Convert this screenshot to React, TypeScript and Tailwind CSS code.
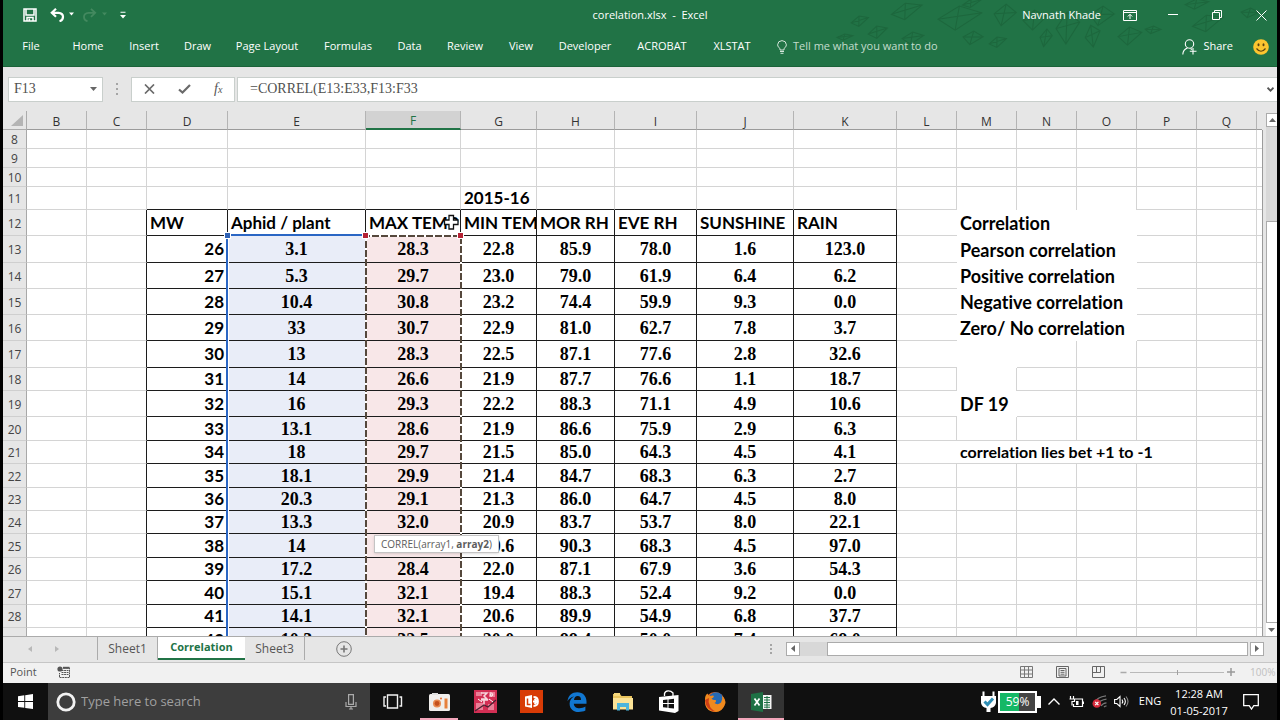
import type { ReactNode } from "react";
import clsx from "clsx";

type Row = { n: number; h: string; values?: string[] };

const COLUMNS = [
  { name: "B", w: "w-[60px]" },
  { name: "C", w: "w-[60px]" },
  { name: "D", w: "w-[81px]" },
  { name: "E", w: "w-[138px]" },
  { name: "F", w: "w-[95px]" },
  { name: "G", w: "w-[76px]" },
  { name: "H", w: "w-[78px]" },
  { name: "I", w: "w-[82px]" },
  { name: "J", w: "w-[97px]" },
  { name: "K", w: "w-[103px]" },
  { name: "L", w: "w-[60px]" },
  { name: "M", w: "w-[60px]" },
  { name: "N", w: "w-[60px]" },
  { name: "O", w: "w-[60px]" },
  { name: "P", w: "w-[60px]" },
  { name: "Q", w: "w-[60px]" },
];

// values run from column D to column K
const ROWS: Row[] = [
  { n: 8, h: "h-[19px]" },
  { n: 9, h: "h-[19px]" },
  { n: 10, h: "h-[19px]" },
  { n: 11, h: "h-[23px]", values: ["", "", "", "2015-16", "", "", "", ""] },
  { n: 12, h: "h-[26px]", values: ["MW", "Aphid / plant", "MAX TEMP", "MIN TEMP", "MOR RH", "EVE RH", "SUNSHINE", "RAIN"] },
  { n: 13, h: "h-[27px]", values: ["26", "3.1", "28.3", "22.8", "85.9", "78.0", "1.6", "123.0"] },
  { n: 14, h: "h-[26px]", values: ["27", "5.3", "29.7", "23.0", "79.0", "61.9", "6.4", "6.2"] },
  { n: 15, h: "h-[26px]", values: ["28", "10.4", "30.8", "23.2", "74.4", "59.9", "9.3", "0.0"] },
  { n: 16, h: "h-[26px]", values: ["29", "33", "30.7", "22.9", "81.0", "62.7", "7.8", "3.7"] },
  { n: 17, h: "h-[27px]", values: ["30", "13", "28.3", "22.5", "87.1", "77.6", "2.8", "32.6"] },
  { n: 18, h: "h-[23px]", values: ["31", "14", "26.6", "21.9", "87.7", "76.6", "1.1", "18.7"] },
  { n: 19, h: "h-[26px]", values: ["32", "16", "29.3", "22.2", "88.3", "71.1", "4.9", "10.6"] },
  { n: 20, h: "h-[24px]", values: ["33", "13.1", "28.6", "21.9", "86.6", "75.9", "2.9", "6.3"] },
  { n: 21, h: "h-[23px]", values: ["34", "18", "29.7", "21.5", "85.0", "64.3", "4.5", "4.1"] },
  { n: 22, h: "h-[24px]", values: ["35", "18.1", "29.9", "21.4", "84.7", "68.3", "6.3", "2.7"] },
  { n: 23, h: "h-[23px]", values: ["36", "20.3", "29.1", "21.3", "86.0", "64.7", "4.5", "8.0"] },
  { n: 24, h: "h-[23px]", values: ["37", "13.3", "32.0", "20.9", "83.7", "53.7", "8.0", "22.1"] },
  { n: 25, h: "h-[24px]", values: ["38", "14", "", "20.6", "90.3", "68.3", "4.5", "97.0"] },
  { n: 26, h: "h-[23px]", values: ["39", "17.2", "28.4", "22.0", "87.1", "67.9", "3.6", "54.3"] },
  { n: 27, h: "h-[24px]", values: ["40", "15.1", "32.1", "19.4", "88.3", "52.4", "9.2", "0.0"] },
  { n: 28, h: "h-[23px]", values: ["41", "14.1", "32.1", "20.6", "89.9", "54.9", "6.8", "37.7"] },
  { n: 29, h: "h-[24px]", values: ["42", "10.3", "32.5", "20.0", "88.4", "50.0", "7.4", "68.0"] },
];

// text in column M that spills to the right
const NOTES: Record<number, { text: string; span: number; small?: boolean; line?: boolean }> = {
  12: { text: "Correlation", span: 3 },
  13: { text: "Pearson correlation", span: 3 },
  14: { text: "Positive correlation", span: 3 },
  15: { text: "Negative correlation", span: 3 },
  16: { text: "Zero/ No correlation", span: 3 },
  17: { text: "", span: 1 },
  19: { text: "DF 19", span: 1 },
  21: { text: "correlation lies bet +1 to -1", span: 4, small: true, line: true },
};

const MENU = [
  { label: "File", w: "w-[56px]" },
  { label: "Home", w: "w-[58px]" },
  { label: "Insert", w: "w-[54px]" },
  { label: "Draw", w: "w-[53px]" },
  { label: "Page Layout", w: "w-[86px]" },
  { label: "Formulas", w: "w-[76px]" },
  { label: "Data", w: "w-[47px]" },
  { label: "Review", w: "w-[64px]" },
  { label: "View", w: "w-[48px]" },
  { label: "Developer", w: "w-[80px]" },
  { label: "ACROBAT", w: "w-[74px]" },
  { label: "XLSTAT", w: "w-[66px]" },
];

// x, y, half width, half height
const KITES = [
  [80, 11, 16, 8], [133, 18, 22, 12], [178, 15, 11, 11], [51, 32, 10, 6], [86, 38, 11, 6], [146, 38, 10, 7],
  [171, 42, 9, 5], [241, 28, 12, 16], [219, 38, 6, 9], [266, 36, 8, 11], [303, 36, 12, 9], [326, 30, 8, 4],
  [381, 23, 16, 8], [208, 20, 12, 10], [275, 16, 12, 10], [145, 3, 10, 4], [370, 4, 12, 5], [423, 13, 9, 5],
  [33, 21, 9, 5], [18, 37, 8, 3],
];

function KitePattern() {
  return (
    <svg viewBox="0 0 450 52" className="absolute right-0 top-0 h-[52px] w-[450px]" fill="none" stroke="#1d673d" aria-hidden="true">
      {KITES.map(([x, y, a, b], i) => (
        <path
          key={i}
          transform={`rotate(${(i % 3) * 9 - 12} ${x} ${y})`}
          d={`M${x - a} ${y} L${x} ${y - b} L${x + a} ${y - b / 3} L${x - a / 4} ${y + b} Z M${x - a} ${y} L${x + a} ${y - b / 3} M${x} ${y - b} L${x - a / 4} ${y + b}`}
        />
      ))}
    </svg>
  );
}

function IconButton({ label, className, children }: { label: string; className?: string; children: ReactNode }) {
  return (
    <button type="button" aria-label={label} className={clsx("flex shrink-0 items-center justify-center", className)}>
      {children}
    </button>
  );
}

function TitleBar() {
  return (
    <div className="relative flex h-[30px] items-center text-[11px] text-white">
      <div className="flex flex-1 items-center pl-5">
        <IconButton label="Save" className="w-[14px]">
          <svg width="14" height="14" viewBox="0 0 14 14" fill="none" stroke="#fff" strokeWidth="1.5">
            <path d="M1 1h12v12H1zM3 1v6h8V1M4 13V9.500h6V13" />
            <path d="M5.5 10.5h1.6V13H5.5z" fill="#fff" stroke="none" />
          </svg>
        </IconButton>
        <IconButton label="Undo" className="ml-[13px]">
          <svg width="24" height="14" viewBox="0 0 24 14" fill="none">
            <path d="M6 0.8L1.8 4.8L6 8.8M2 4.8h6.5q4.5 0.4 4.5 4t-3.5 4.4" stroke="#fff" strokeWidth="2.2" />
            <path d="M19 4.5h5l-2.5 3z" fill="#fff" />
          </svg>
        </IconButton>
        <IconButton label="Redo" className="ml-2">
          <svg width="26" height="14" viewBox="0 0 26 14" fill="none">
            <path d="M9 0.8L13.2 4.8L9 8.8M13 4.8H6.500q-4.500 0.400-4.500 4t3.500 4.400" stroke="#43895f" strokeWidth="1.800" />
            <path d="M20 4.500h5l-2.500 3z" fill="#43895f" />
          </svg>
        </IconButton>
        <IconButton label="Customize Quick Access Toolbar" className="ml-3">
          <svg width="6" height="8" viewBox="0 0 6 8" fill="#fff">
            <path d="M0.500 0.800h5v1h-5zM0 4h6L3 7.500z" />
          </svg>
        </IconButton>
      </div>
      <h1 className="whitespace-pre">corelation.xlsx  -  Excel</h1>
      <div className="flex flex-1 items-center justify-end">
        <span>Navnath Khade</span>
        <IconButton label="Ribbon Display Options" className="ml-5 w-[18px]">
          <svg width="14" height="11" viewBox="0 0 14 11" fill="none" stroke="#fff">
            <path d="M0.500 0.500h13v10h-13zM0.500 2.500h13M7 9V4.500M4.800 6.500L7 4.300L9.200 6.500" />
          </svg>
        </IconButton>
        <IconButton label="Minimize" className="ml-6 w-[20px]">
          <svg width="10" height="10" viewBox="0 0 10 10" stroke="#fff"><path d="M0 4.500h10" /></svg>
        </IconButton>
        <IconButton label="Restore" className="ml-6 w-[20px]">
          <svg width="10" height="10" viewBox="0 0 10 10" fill="none" stroke="#fff">
            <path d="M0.500 2.500h7v7h-7zM2.500 2.500v-2h7v7h-2" />
          </svg>
        </IconButton>
        <IconButton label="Close" className="ml-6 mr-1.5 w-[20px]">
          <svg width="11" height="11" viewBox="0 0 11 11" stroke="#fff"><path d="M0.500 0.500l10 10M10.500 0.500l-10 10" /></svg>
        </IconButton>
      </div>
    </div>
  );
}

function Ribbon() {
  return (
    <div className="relative flex h-[37px] items-center pb-1 text-[11px] text-white">
      <nav className="flex">
        {MENU.map((m) => (
          <button key={m.label} type="button" className={clsx("whitespace-nowrap text-center", m.w)}>
            {m.label}
          </button>
        ))}
      </nav>
      <button type="button" className="ml-3 flex items-center gap-1.5 text-[#c3dccd]">
        <svg width="10" height="14" viewBox="0 0 10 14" fill="none" stroke="#d5e7dc">
          <path d="M3 10V8.500Q0.600 7 0.600 4.800Q0.800 0.800 5 0.600Q9.200 0.800 9.400 4.800Q9.400 7 7 8.500V10zM3 11.500h4M3.500 13.300h3" />
        </svg>
        Tell me what you want to do
      </button>
      <button type="button" className="ml-auto flex items-center gap-1.5">
        <svg width="15" height="16" viewBox="0 0 15 16" fill="none" stroke="#fff" strokeWidth="1.100">
          <circle cx="7.500" cy="5" r="4.200" />
          <path d="M0.800 15.500Q1 10.500 5.500 9M8.500 9.500l1.500 1M11 9v6.500M7.800 12.300h6.700" />
        </svg>
        Share
      </button>
      <IconButton label="Feedback" className="ml-5 mr-2">
        <svg width="16" height="16" viewBox="0 0 16 16">
          <circle cx="8" cy="8" r="7.800" fill="#fcc52f" />
          <ellipse cx="5.500" cy="5.800" rx="1" ry="1.500" fill="#5b4210" />
          <ellipse cx="10.500" cy="5.800" rx="1" ry="1.500" fill="#5b4210" />
          <path d="M3.500 9.500q4.500 5.500 9 0" fill="none" stroke="#5b4210" strokeWidth="1.200" />
        </svg>
      </IconButton>
    </div>
  );
}

function FormulaBar() {
  return (
    <div className="flex h-[44px] shrink-0 items-center bg-[#e6e6e6] pl-[5px]">
      <div className="flex h-[25px] w-[95px] items-center border border-[#c9cfcc] bg-white">
        <input aria-label="Name Box" defaultValue="F13" className="w-0 flex-1 pl-[5px] font-['Liberation_Serif',serif] text-sm text-[#505050] outline-none" />
        <IconButton label="Open name list" className="w-[18px]">
          <svg width="7" height="4" viewBox="0 0 7 4" fill="#666"><path d="M0 0h7L3.500 4z" /></svg>
        </IconButton>
      </div>
      <svg width="2" height="12" viewBox="0 0 2 12" fill="#a5a5a5" className="mx-[13px]">
        <path d="M0 0h2v2H0zM0 5h2v2H0zM0 10h2v2H0z" />
      </svg>
      <div className="flex h-[25px] w-[104px] items-center justify-around border border-[#c9cfcc] bg-white">
        <IconButton label="Cancel">
          <svg width="11" height="10" viewBox="0 0 11 10" stroke="#6a6a6a" strokeWidth="1.700"><path d="M1 0.500l9 9M10 0.500l-9 9" /></svg>
        </IconButton>
        <IconButton label="Enter">
          <svg width="13" height="10" viewBox="0 0 13 10" fill="none" stroke="#6a6a6a" strokeWidth="2.200"><path d="M1 5.500l3.500 3L12 1" /></svg>
        </IconButton>
        <button type="button" aria-label="Insert Function" className="font-['Liberation_Serif',serif] text-sm italic leading-none text-[#555]">
          f<span className="text-[10px]">x</span>
        </button>
      </div>
      <div className="ml-[2px] flex h-[25px] flex-1 items-center border border-r-0 border-[#c9cfcc] bg-white">
        <input aria-label="Formula Bar" defaultValue="=CORREL(E13:E33,F13:F33" className="w-0 flex-1 pl-3 font-['Liberation_Serif',serif] text-sm text-[#505050] outline-none" />
        <IconButton label="Expand Formula Bar" className="w-[14px]">
          <svg width="7" height="5" viewBox="0 0 7 5" fill="none" stroke="#555" strokeWidth="1.800"><path d="M0.500 0.700L3.500 3.700L6.500 0.700" /></svg>
        </IconButton>
      </div>
    </div>
  );
}

function SheetRow({ row }: { row: Row }) {
  const note = NOTES[row.n];
  const inTable = row.n >= 12;
  const cells: ReactNode[] = [];
  for (let c = 0; c < COLUMNS.length; c++) {
    const { name } = COLUMNS[c];
    if (name === "M" && note) {
      cells.push(
        <td
          key={name}
          colSpan={note.span}
          className={clsx(
            "whitespace-nowrap border-[#d4d4d4] pl-[3px]",
            note.small ? "text-base leading-[18px]" : "text-lg leading-[18px]",
            note.line && "border-b border-r",
          )}
        >
          {note.text}
        </td>,
      );
      c += note.span - 1;
      continue;
    }
    const value = c >= 2 && c <= 9 ? row.values?.[c - 2] : undefined;
    const isData = row.n >= 13 && c >= 3 && c <= 9;
    const blackBottom = row.n >= 11 && c >= 2 && c <= 9;
    const blackRight = inTable && c >= 1 && c <= 9;
    const noRight = name === "L" && note;
    const noBottom = (row.n === 11 && (name === "M" || name === "N" || name === "O")) || (row.n === 18 && name === "M");
    cells.push(
      <td
        key={name}
        className={clsx(
          "overflow-hidden whitespace-nowrap leading-[18px]",
          !noBottom && "border-b",
          !noRight && "border-r",
          blackBottom ? "border-b-[#1c1c1c]" : "border-b-[#d4d4d4]",
          blackRight ? "border-r-[#1c1c1c]" : "border-r-[#d4d4d4]",
          isData ? "text-center font-['Liberation_Serif',serif] text-[18px]" : "text-[17px]",
          !isData && (name === "D" && row.n >= 13 ? "pr-[3px] text-right" : "pl-[3px]"),
          row.n >= 13 && name === "E" && "bg-[#e9edf8]",
          row.n >= 13 && name === "F" && "bg-[#f8e7e8]",
        )}
      >
        {value}
      </td>,
    );
  }
  return (
    <tr className={row.h}>
      <th scope="row" className="border-b border-r border-b-[#cfcfcf] border-r-[#a8a8a8] bg-[#e6e6e6] pt-0.5 text-center align-middle font-['Open_Sans',sans-serif] text-xs font-normal leading-3 text-[#444]">
        {row.n}
      </th>
      {cells}
      <td className="border-b border-[#d4d4d4]" />
    </tr>
  );
}

function Selection() {
  return (
    <>
      <div className="absolute bottom-0 left-[223px] top-[123px] w-[140px] border-l-2 border-t-2 border-[#2a66c4]" />
      <div className="absolute bottom-0 left-[225px] top-[125px] w-px bg-white" />
      <div className="absolute left-[222px] top-[122px] size-[5px] bg-[#2f62b5] outline outline-white" />
      <svg className="absolute left-[361px] top-[122px] h-[408px] w-[98px]" fill="none" aria-hidden="true">
        <path d="M2 600V3H97V600" stroke="#fff" strokeWidth="2" />
        <path d="M2 600V3H97V600" stroke="#55483c" strokeWidth="2" strokeDasharray="7 2" />
      </svg>
      <div className="absolute left-[360px] top-[122px] size-[5px] bg-[#b52234] outline outline-white" />
      <div className="absolute left-[455px] top-[122px] size-[5px] bg-[#b52234] outline outline-white" />
    </>
  );
}

function Grid() {
  return (
    <div className="flex min-h-0 flex-1 bg-[#e6e6e6]">
      <div className="relative min-w-0 flex-1 overflow-hidden">
        <table className="w-full table-fixed border-separate border-spacing-0 bg-white font-['Lato',sans-serif] font-bold leading-[18px] text-black [font-variant-ligatures:none]">
          <colgroup>
            <col className="w-[24px]" />
            {COLUMNS.map((c) => <col key={c.name} className={c.w} />)}
            <col />
          </colgroup>
          <thead>
            <tr className="h-[19px] bg-[#e6e6e6]">
              <th aria-label="Select all" className="border-b border-r border-[#ababab]">
                <svg width="12" height="11" viewBox="0 0 12 11" fill="#b4b4b4" className="ml-auto mr-[3px]"><path d="M12 0v11H0z" /></svg>
              </th>
              {COLUMNS.map((c) => (
                <th
                  key={c.name}
                  scope="col"
                  className={clsx(
                    "border-b border-r border-r-[#b4b4b4] pt-[3px] font-['Open_Sans',sans-serif] text-xs font-normal leading-[14px]",
                    c.name === "F" ? "border-b-2 border-b-[#217346] bg-[#d2d2d2] text-[#217346]" : "border-b-[#9b9b9b] text-[#333]",
                  )}
                >
                  {c.name}
                </th>
              ))}
              <th className="border-b border-[#9b9b9b]" />
            </tr>
          </thead>
          <tbody>
            {ROWS.map((row) => <SheetRow key={row.n} row={row} />)}
          </tbody>
        </table>
        <Selection />
        <svg className="absolute left-[440px] top-[103px] size-4" viewBox="0 0 16 16" fill="#fff" stroke="#111" strokeWidth="1.300" aria-hidden="true">
          <path d="M6 1.500h4.500V6H15v4.500h-4.500V15H6v-4.500H1.500V6H6z" />
        </svg>
        <div className="absolute left-[371px] top-[424px] flex h-[18px] items-center border border-[#c4c4c4] bg-white px-1.5 font-['Open_Sans',sans-serif] text-[10px] text-[#5c5c5c] shadow">
          <span>CORREL(array1, <b>array2</b>)</span>
        </div>
      </div>
      <div className="mt-[19px] w-px bg-[#9b9b9b]" />
      <div className="flex w-[14px] flex-col pl-[3px] pt-[2px]">
        <IconButton label="Scroll up" className="h-[14px] border border-r-0 border-[#ababab] bg-white">
          <svg width="7" height="4" viewBox="0 0 7 4" fill="#666"><path d="M0 4h7L3.500 0z" /></svg>
        </IconButton>
        <div className="h-[94px] bg-[#d8d8d8]" />
        <div className="flex-1 border border-r-0 border-[#ababab] bg-white" />
        <IconButton label="Scroll down" className="h-[13px] bg-white">
          <svg width="7" height="4" viewBox="0 0 7 4" fill="#666"><path d="M0 0h7L3.500 4z" /></svg>
        </IconButton>
      </div>
    </div>
  );
}

function SheetTabs() {
  return (
    <div className="flex h-[27px] shrink-0 items-start border-y border-t-[#ababab] border-b-[#c6c6c6] bg-[#e6e6e6] text-xs text-[#555]">
      <div className="flex h-[23px] w-[95px] items-center border-r border-[#ababab] pl-[25px]">
        <IconButton label="Previous sheet">
          <svg width="4" height="6" viewBox="0 0 4 6" fill="#b8b8b8"><path d="M4 0v6L0 3z" /></svg>
        </IconButton>
        <IconButton label="Next sheet" className="ml-[23px]">
          <svg width="4" height="6" viewBox="0 0 4 6" fill="#b8b8b8"><path d="M0 0v6L4 3z" /></svg>
        </IconButton>
      </div>
      <button type="button" className="h-[23px] w-[60px] border-r border-[#ababab]">Sheet1</button>
      <button type="button" className="h-[23px] w-[87px] border-b-2 border-[#217346] bg-white text-[11px] font-bold text-[#217346]">Correlation</button>
      <button type="button" className="h-[23px] w-[60px] border-r border-[#ababab]">Sheet3</button>
      <IconButton label="New sheet" className="ml-[31px] h-[23px]">
        <svg width="16" height="16" viewBox="0 0 16 16" fill="none" stroke="#777"><circle cx="8" cy="8" r="7.300" /><path d="M8 4.500v7M4.500 8h7" strokeWidth="1.600" /></svg>
      </IconButton>
      <div className="ml-auto flex h-[23px] w-[507px] items-center pr-[13px]">
        <svg width="2" height="10" viewBox="0 0 2 10" fill="#a5a5a5" className="mr-[14px]">
          <path d="M0 0h2v2H0zM0 4h2v2H0zM0 8h2v2H0z" />
        </svg>
        <IconButton label="Scroll left" className="h-[14px] w-[14px] border border-[#ababab] bg-white">
          <svg width="4" height="7" viewBox="0 0 4 7" fill="#666"><path d="M4 0v7L0 3.500z" /></svg>
        </IconButton>
        <div className="h-[14px] w-[27px] bg-[#d8d8d8]" />
        <div className="h-[14px] flex-1 border border-[#ababab] bg-white" />
        <IconButton label="Scroll right" className="ml-[2px] h-[14px] w-[14px] border border-[#ababab] bg-white">
          <svg width="4" height="7" viewBox="0 0 4 7" fill="#666"><path d="M0 0v7L4 3.500z" /></svg>
        </IconButton>
      </div>
    </div>
  );
}

function StatusBar() {
  return (
    <div className="flex h-[20px] shrink-0 items-center bg-[#f1f1f1] pb-0.5 pl-[7px] text-[11px] text-[#555]">
      <span className="w-[27px]">Point</span>
      <IconButton label="Record macro" className="ml-5">
        <svg width="13" height="12" viewBox="0 0 13 12" fill="none" stroke="#555">
          <circle cx="3" cy="3" r="2.600" fill="#555" stroke="none" />
          <path d="M6.500 2h6v9.500h-10V7M4.500 6.500h7M4.500 8.500h7M4.500 4.500h7" strokeDasharray="2 0.600" />
          <path d="M6 0.800h6.500v2H6z" fill="#555" stroke="none" />
        </svg>
      </IconButton>
      <div className="ml-auto flex items-center">
        <IconButton label="Normal view">
          <svg width="13" height="12" viewBox="0 0 13 12" fill="none" stroke="#777"><path d="M0.500 0.500h12v11h-12zM4.500 0.500v11M8.500 0.500v11M0.500 4h12M0.500 8h12" /></svg>
        </IconButton>
        <IconButton label="Page layout view" className="ml-[23px]">
          <svg width="13" height="12" viewBox="0 0 13 12" fill="none" stroke="#666"><path d="M0.500 0.500h12v11h-12zM3 2.500h7v7.500H3zM4.500 4.500h4M4.500 6.300h4M4.500 8.200h4" /></svg>
        </IconButton>
        <IconButton label="Page break preview" className="ml-[23px]">
          <svg width="13" height="12" viewBox="0 0 13 12" fill="none" stroke="#666"><path d="M0.500 0.500h12v11h-12zM4.500 0.500v6M8.500 0.500v6M0.500 6.500h8" /></svg>
        </IconButton>
        <IconButton label="Zoom out" className="ml-[15px]">
          <svg width="7" height="7" viewBox="0 0 7 7" stroke="#aaa" strokeWidth="1.500"><path d="M0.500 3.500h6" /></svg>
        </IconButton>
        <div className="ml-[3px] flex w-[94px] items-center">
          <input type="range" aria-label="Zoom" className="h-px w-full appearance-none bg-[#b9b9b9] [&::-webkit-slider-thumb]:h-[5px] [&::-webkit-slider-thumb]:w-px [&::-webkit-slider-thumb]:appearance-none [&::-webkit-slider-thumb]:bg-[#a0a0a0]" />
        </div>
        <IconButton label="Zoom in" className="ml-[3px]">
          <svg width="8" height="8" viewBox="0 0 8 8" stroke="#999" strokeWidth="1.500"><path d="M0 4h8M4 0v8" /></svg>
        </IconButton>
        <span className="ml-[15px] w-[27px] text-[10px] text-[#c0c0c0]">100%</span>
      </div>
    </div>
  );
}

function TaskApp({ label, open, active, children }: { label: string; open?: boolean; active?: boolean; children: ReactNode }) {
  return (
    <button type="button" aria-label={label} className={clsx("relative flex w-[46px] items-center justify-center", active && "bg-[#333]")}>
      {children}
      {open && <span className={clsx("absolute bottom-0 h-[2px] bg-[#f3a6bb]", active ? "inset-x-0" : "inset-x-1")} />}
    </button>
  );
}

function Taskbar() {
  return (
    <footer className="flex h-[37px] shrink-0 bg-[#101010] text-white">
      <IconButton label="Start" className="w-[45px]">
        <svg width="15" height="15" viewBox="0 0 15 15" fill="#fff"><path d="M0 2.200L6.300 1.300V7H0zM7.200 1.200L15 0v7H7.200zM0 8h6.300v5.800L0 12.900zM7.200 8H15v7l-7.800-1.100z" /></svg>
      </IconButton>
      <div className="flex w-[322px] items-center bg-[#3d3d3d] pl-2">
        <svg width="20" height="20" viewBox="0 0 20 20" fill="none" stroke="#f2f2f2" strokeWidth="2.800"><circle cx="10" cy="10" r="8.200" /></svg>
        <input aria-label="Search" placeholder="Type here to search" className="ml-[5px] w-0 flex-1 text-[13px] outline-none placeholder:text-[#a0a0a0]" />
        <IconButton label="Voice search" className="mr-[13px]">
          <svg width="12" height="16" viewBox="0 0 12 16" fill="none" stroke="#aaa" strokeWidth="1.200"><path d="M3.600 0.600h4.800v9.800H3.600zM1 8v4.500h10V8M6 12.500V15M4 15h4" /></svg>
        </IconButton>
      </div>
      <TaskApp label="Task View">
        <svg width="20" height="15" viewBox="0 0 20 15" fill="none" stroke="#f2f2f2" strokeWidth="1.400"><path d="M4.500 1h10v13h-10zM3 3H1v9h2M16.500 3h2v9h-2" /></svg>
      </TaskApp>
      <TaskApp label="Screen recorder" open>
        <svg width="21" height="18" viewBox="0 0 21 18">
          <rect y="1" width="21" height="17" rx="1.500" fill="#f0eeec" />
          <path d="M3 0h6v2H3z" fill="#ddd" />
          <circle cx="8" cy="10.500" r="4" fill="#e8894f" /><circle cx="8" cy="10.500" r="2.400" fill="#c4501c" /><circle cx="12" cy="5.500" r="1" fill="#e66a2c" />
          <path d="M15.500 5.500h3v10h-3z" fill="#e6803c" />
        </svg>
      </TaskApp>
      <TaskApp label="Statistics">
        <svg width="23" height="23" viewBox="0 0 23 23" fill="none">
          <rect width="23" height="23" fill="#d22f54" />
          <path d="M2 2h6v4H2zM15 2h6v5h-6zM2 13h7v7H2zM14 14h6v6h-6z" fill="#ea7f97" />
          <path d="M7 3h6l-3 3 3 3H7M10 10v6M7 10h7" stroke="#f7d7de" strokeWidth="1.500" />
          <path d="M1 21L10 15l4 2 8-7" stroke="#4a2130" strokeWidth="1.300" />
          <path d="M16 3q4 0 2 3-3 1-1-2M4 9l4 3M15 9l4 3" stroke="#fff" />
        </svg>
      </TaskApp>
      <TaskApp label="Lync dictionary">
        <svg width="23" height="23" viewBox="0 0 23 23" fill="none">
          <rect width="23" height="23" fill="#d83b06" />
          <path d="M5 6.500l7-1.500v13l-7-1.500z" fill="#fff" />
          <path d="M7.500 8.500v6h3" stroke="#d83b06" strokeWidth="1.500" />
          <path d="M13.500 7q4.500 0 4.500 4.500T13.500 16M13 11.500h3.500M14.500 9l2.500 2.500-2.500 2.500" stroke="#fff" strokeWidth="1.800" />
        </svg>
      </TaskApp>
      <TaskApp label="Edge">
        <svg width="20" height="20" viewBox="0 0 20 20" fill="#1177d1">
          <path d="M0.500 9.200C1.300 3.500 5 0.300 10.300 0.300c6 0 9.200 4.300 9.200 9.200v2.200H6.800c0.200 3.200 2.700 4.500 5.700 4.500 2.200 0 4.200-0.600 5.900-1.600v4c-1.900 1-4.300 1.400-6.600 1.400-5.500 0-9.200-3.300-9.200-8.300 0-3.300 1.600-5.700 4.500-7.300-3 0.500-5.200 2.300-6.600 4.800zM7 8h7c0-2.400-1.100-3.900-3.300-3.900C8.600 4.100 7.300 5.700 7 8z" />
        </svg>
      </TaskApp>
      <TaskApp label="File Explorer">
        <svg width="20" height="18" viewBox="0 0 20 18">
          <path d="M0 1h7l1.500 2H19v13H0z" fill="#e9c45e" /><path d="M1 0h6v3H1z" fill="#f5d77c" />
          <path d="M0 5h20v11.500H0z" fill="#fbe397" />
          <path d="M4 10h12v7.500h-3V14H7v3.500H4z" fill="#4db5dc" />
        </svg>
      </TaskApp>
      <TaskApp label="Store">
        <svg width="20" height="23" viewBox="0 0 20 23">
          <path d="M5.500 6V3.500Q6 1 9 0.800T14 3v3" fill="none" stroke="#fff" strokeWidth="1.300" />
          <path d="M0 7l19.500-2v16L16 23 0 20.500z" fill="#fff" />
          <path d="M4 10l4.500-0.500V13H4zM9.500 9.400L15 8.800V13H9.500zM4 14h4.500v3.800L4 17.300zM9.500 14H15v4.600l-5.500-0.700z" fill="#101010" />
        </svg>
      </TaskApp>
      <TaskApp label="Firefox">
        <svg width="22" height="22" viewBox="0 0 22 22">
          <circle cx="11" cy="11" r="10" fill="#e8631a" />
          <circle cx="12" cy="8.500" r="7.300" fill="#256ab4" />
          <path d="M1 8Q1 4 3.500 2.500 4 4.500 6 5q3-1 4 0-0.500 2-2.500 2.500 1.500 2 4 1.500 1.500 1.500-1 3 3 2.500 6.500-0.500 2-3 1-6.500 3.500 3 3.500 7-3 9-10 9Q2 20.500 1 12z" fill="#f08a1e" />
          <path d="M1 9Q2 20 12 20.500 6 18 5.500 13.500 4 11 5 7z" fill="#cf3f16" />
        </svg>
      </TaskApp>
      <TaskApp label="Excel" open active>
        <svg width="21" height="20" viewBox="0 0 21 20">
          <path d="M10 3h10.500v14H10z" fill="#f5f5f5" />
          <path d="M13 5.500h6M13 8h6M13 10.500h6M13 13h6M13 15.200h6M16 4v12.500" stroke="#1e7145" strokeWidth="1" />
          <path d="M0 2l12-2v20L0 18z" fill="#1e7145" />
          <path d="M3.500 6.500l5 7M8.500 6.500l-5 7" stroke="#fff" strokeWidth="1.700" />
        </svg>
      </TaskApp>
      <div className="ml-auto flex items-center">
        <svg width="15" height="22" viewBox="0 0 15 22" aria-hidden="true">
          <path d="M1.500 0.500h2V5h8V0.500h2V5H15v7q-1 4.500-5.500 5v4h-4v-4Q1 16.500 0 12V5h1.500z" fill="#fff" />
          <path d="M3.500 10.500l3 3 5.500-6" fill="none" stroke="#2f8fb5" strokeWidth="3" />
        </svg>
        <div className="ml-[2px] flex items-center">
          <div className="flex h-[22px] w-[39px] items-center justify-center border-2 border-white bg-[linear-gradient(90deg,#14b866_55%,#444_55%)] text-xs">59%</div>
          <div className="h-[12px] w-[4px] bg-white" />
        </div>
        <IconButton label="Show hidden icons" className="ml-[7px]">
          <svg width="12" height="7" viewBox="0 0 12 7" fill="none" stroke="#fff" strokeWidth="1.400"><path d="M0.500 6.500L6 1l5.500 5.500" /></svg>
        </IconButton>
        <IconButton label="Power" className="ml-[9px]">
          <svg width="15" height="12" viewBox="0 0 15 12" fill="none" stroke="#fff" strokeWidth="1.200"><path d="M6 3h7.500v7.500h-9V8M14.500 5.500v2.500M1.500 0v3M4.500 0v3M0.500 3h5v2.500H3v4" /><path d="M7 5h2.500v4H7z" fill="#fff" stroke="none" /></svg>
        </IconButton>
        <IconButton label="Network" className="ml-[8px]">
          <svg width="15" height="13" viewBox="0 0 15 13" fill="none" stroke="#777" strokeWidth="1.300">
            <path d="M2 8Q5 2 14 0.800M6 9Q8 5 14.500 4.200M9 11q2-3 5.500-3.200M12 12q1-1 2.500-1.200" />
            <circle cx="4.800" cy="8.500" r="4.300" fill="#d6293a" stroke="none" /><path d="M3.200 6.900l3.200 3.200M6.400 6.900L3.200 10.100" stroke="#fff" />
          </svg>
        </IconButton>
        <IconButton label="Volume" className="ml-[7px]">
          <svg width="15" height="13" viewBox="0 0 15 13" fill="none" stroke="#fff" strokeWidth="1.100"><path d="M0.600 4.500h2.200L6 1.500v10L2.800 8.500H0.600zM8 4.500q1.500 2 0 4M10 3q2.700 3.500 0 7" /><path d="M12 1.500q4 5 0 10" stroke="#888" /></svg>
        </IconButton>
        <button type="button" className="ml-2 w-[26px] text-[11px]">ENG</button>
        <button type="button" className="ml-[6px] w-[60px] whitespace-nowrap text-center text-[11px] leading-[17px]">
          <span className="block">12:28 AM</span>
          <span className="block">01-05-2017</span>
        </button>
        <IconButton label="Notifications" className="ml-[14px] mr-[18px]">
          <svg width="16" height="16" viewBox="0 0 16 16" fill="none" stroke="#fff" strokeWidth="1.300"><path d="M0.700 0.700h14.600v11h-4.500L8.500 15l-2.300-3.300H0.700z" /></svg>
        </IconButton>
      </div>
    </footer>
  );
}

export default function App() {
  return (
    <div className="h-screen overflow-hidden bg-black px-[3px] font-['Open_Sans',sans-serif]">
      <div className="flex h-full flex-col">
        <header className="relative h-[67px] shrink-0 overflow-hidden border-b border-[#1b6339] bg-[#217346]">
          <KitePattern />
          <TitleBar />
          <Ribbon />
        </header>
        <FormulaBar />
        <Grid />
        <SheetTabs />
        <StatusBar />
        <Taskbar />
      </div>
    </div>
  );
}
